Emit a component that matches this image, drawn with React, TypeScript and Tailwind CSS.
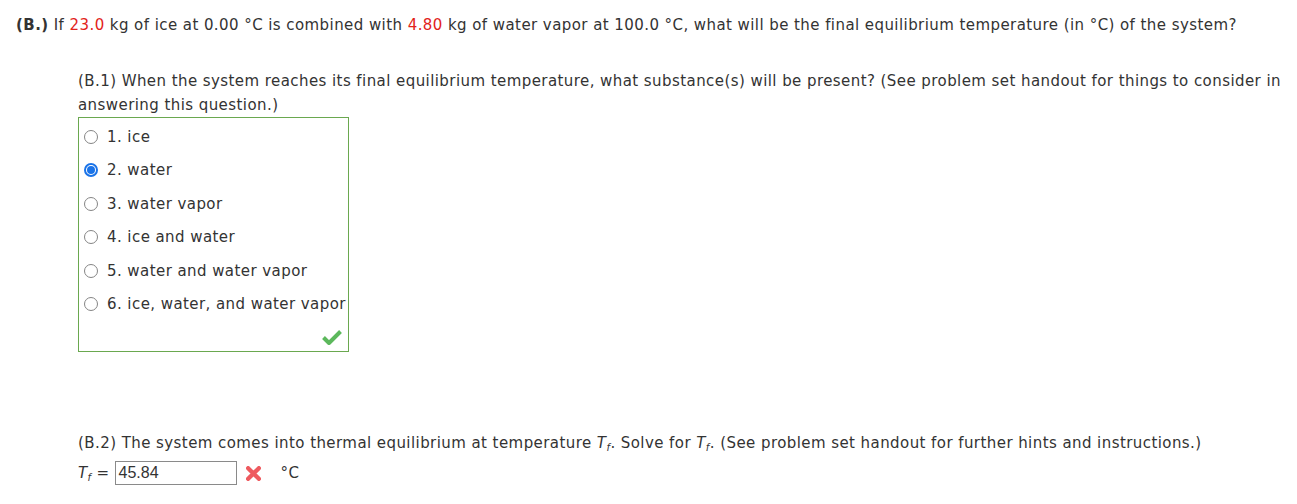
const options = [
  "1. ice",
  "2. water",
  "3. water vapor",
  "4. ice and water",
  "5. water and water vapor",
  "6. ice, water, and water vapor",
];

function Radio({ checked }: { checked?: boolean }) {
  if (checked) {
    return (
      <span className="inline-flex h-[14px] w-[14px] shrink-0 items-center justify-center rounded-full border-[2px] border-[#1a73e8] bg-white">
        <span className="h-[8px] w-[8px] rounded-full bg-[#1a73e8]" />
      </span>
    );
  }
  return <span className="inline-block h-[14px] w-[14px] shrink-0 rounded-full border border-[#858585] bg-white" />;
}

function Check() {
  return (
    <svg width="20" height="16" viewBox="0 0 20 16" aria-hidden>
      <path d="M1.5 8.5 L7 14 L18.5 2.5" fill="none" stroke="#5cb85c" strokeWidth="4" strokeLinejoin="round" />
    </svg>
  );
}

function Cross() {
  return (
    <svg width="15" height="15" viewBox="0 0 14 14" aria-hidden>
      <path d="M2 2 L12 12 M12 2 L2 12" stroke="#ee5a5f" strokeWidth="4" strokeLinecap="round" />
    </svg>
  );
}

export default function App() {
  return (
    <div
      className="min-h-[504px] bg-white text-[15px] leading-6 tracking-[0.43px] text-[#333]"
      style={{ fontFamily: '"DejaVu Sans", Verdana, sans-serif' }}
    >
      <p className="pl-4 pt-[13px]">
        <b>(B.)</b> If <span className="text-[#e2231a]">23.0</span> kg of ice at 0.00 °C is combined with{" "}
        <span className="text-[#e2231a]">4.80</span> kg of water vapor at 100.0 °C, what will be the final equilibrium
        temperature (in °C) of the system?
      </p>

      <div className="mt-[32px] pl-[78px]">
        <p>
          (B.1) When the system reaches its final equilibrium temperature, what substance(s) will be present? (See
          problem set handout for things to consider in answering this question.)
        </p>
        <div className="flex h-[235px] w-[271px] flex-col border border-[#6aa84f] pt-[2px]">
          {options.map((o, i) => (
            <label key={o} className="flex h-[33.5px] items-center gap-[9px] pl-[5px] whitespace-nowrap">
              <Radio checked={i === 1} />
              {o}
            </label>
          ))}
          <div className="mt-auto flex justify-end pb-[6px] pr-[6px]">
            <Check />
          </div>
        </div>

        <p className="mt-[79px]">
          (B.2) The system comes into thermal equilibrium at temperature <i>T<sub className="text-[10px]">f</sub></i>.
          Solve for <i>T<sub className="text-[10px]">f</sub></i>. (See problem set handout for further hints and
          instructions.)
        </p>
        <div className="mt-[6px] flex items-center">
          <span className="italic">
            T<sub className="text-[10px]">f</sub>
          </span>
          <span className="ml-[5px]">=</span>
          <div
            className="ml-[5px] flex h-[24px] w-[122px] items-center border border-[#8a8a8a] px-[3px] text-[16px] tracking-normal text-[#333]"
            style={{ fontFamily: '"Liberation Sans", Arial, sans-serif' }}
          >
            45.84
          </div>
          <span className="ml-[9px] flex items-center">
            <Cross />
          </span>
          <span className="ml-[20px]">°C</span>
        </div>
      </div>
    </div>
  );
}
